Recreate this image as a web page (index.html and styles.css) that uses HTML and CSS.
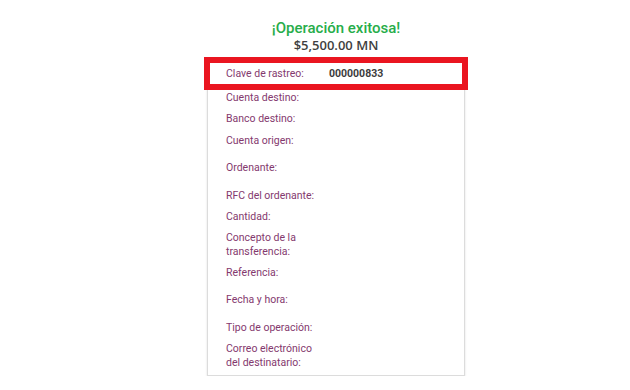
FILE: index.html
```html
<!DOCTYPE html>
<html lang="es">
<head>
<meta charset="utf-8">
<title>Operación exitosa</title>
<link rel="stylesheet" href="styles.css">
</head>
<body>
<main class="receipt">
  <header class="receipt-head">
    <h1 class="title">¡Operación exitosa!</h1>
    <p class="amount">$5,500.00 MN</p>
  </header>
  <section class="card">
    <div class="row row-highlight">
      <span class="label">Clave de rastreo:</span>
      <span class="value">000000833</span>
    </div>
    <div class="row h21"><span class="label">Cuenta destino:</span><span class="value"></span></div>
    <div class="row h22"><span class="label">Banco destino:</span><span class="value"></span></div>
    <div class="row h27"><span class="label">Cuenta origen:</span><span class="value"></span></div>
    <div class="row h28"><span class="label">Ordenante:</span><span class="value"></span></div>
    <div class="row h21"><span class="label">RFC del ordenante:</span><span class="value"></span></div>
    <div class="row h21"><span class="label">Cantidad:</span><span class="value"></span></div>
    <div class="row h35"><span class="label">Concepto de la<br>transferencia:</span><span class="value"></span></div>
    <div class="row h27"><span class="label">Referencia:</span><span class="value"></span></div>
    <div class="row h28"><span class="label">Fecha y hora:</span><span class="value"></span></div>
    <div class="row h21"><span class="label">Tipo de operación:</span><span class="value"></span></div>
    <div class="row h34"><span class="label">Correo electrónico<br>del destinatario:</span><span class="value"></span></div>
  </section>
</main>
</body>
</html>
```

FILE: styles.css
```css
html, body {
  margin: 0;
  padding: 0;
  background: #ffffff;
}

body {
  font-family: Roboto, "Liberation Sans", Arial, sans-serif;
}

.receipt {
  width: 258px;
  margin-left: 207px;
  padding-top: 19px;
}

.receipt-head {
  display: flex;
  flex-direction: column;
  align-items: center;
}

.title {
  margin: 0;
  font-size: 15px;
  line-height: 18px;
  font-weight: 500;
  color: #27ad4a;
}

.amount {
  margin: 0;
  font-family: "Open Sans", "DejaVu Sans", sans-serif;
  font-size: 13px;
  line-height: 16px;
  font-weight: 600;
  color: #3f3f3f;
}

.card {
  margin-top: 8px;
  border: 1px solid #dcdcdc;
  border-top: none;
  box-shadow: 0 1px 2px rgba(0, 0, 0, 0.12);
  display: flex;
  flex-direction: column;
}

.row {
  display: flex;
  align-items: flex-start;
  padding: 1px 0 0 18px;
  box-sizing: border-box;
  font-size: 10.5px;
  line-height: 14px;
}

.label {
  width: 103px;
  flex: none;
  color: #84396e;
}

.value {
  color: #3d3d3d;
  font-weight: 700;
}

.row-highlight {
  margin: -4px -4px 0 -4px;
  border: 6px solid #ea1520;
  height: 33px;
  padding: 0 0 0 16px;
  align-items: center;
  background: #fff;
}

.h21 { height: 21px; }
.h22 { height: 22px; }
.h27 { height: 27px; }
.h28 { height: 28px; }
.h34 { height: 34px; }
.h35 { height: 35px; }
```
